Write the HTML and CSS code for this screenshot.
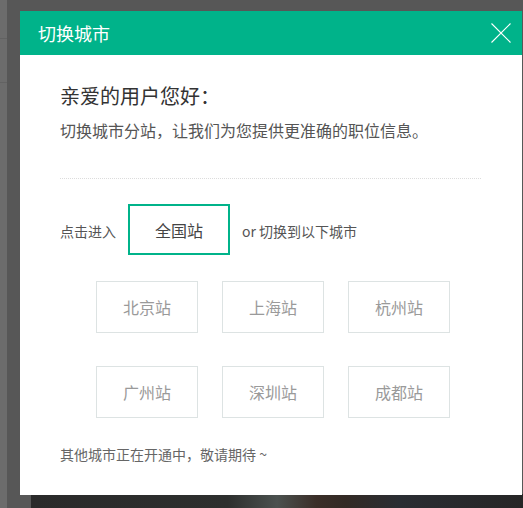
FILE: index.html
```html
<!DOCTYPE html>
<html lang="zh-CN">
<head>
<meta charset="utf-8">
<title>切换城市</title>
<link rel="stylesheet" href="styles.css">
</head>
<body>
<div class="page">
  <div class="strip">
    <div class="strip-line one"></div>
    <div class="strip-line two"></div>
  </div>
  <div class="main">
    <div class="photo"></div>
  </div>
</div>
<div class="dialog">
  <div class="dialog-head">
    <span class="dialog-title">切换城市</span>
    <svg class="close" width="20" height="20" viewBox="0 0 20 20">
      <path d="M0.5 0.5 L19.5 19.5 M19.5 0.5 L0.5 19.5" stroke="#ffffff" stroke-width="1.1" fill="none"/>
    </svg>
  </div>
  <div class="dialog-body">
    <h2 class="hello">亲爱的用户您好：</h2>
    <p class="intro">切换城市分站，让我们为您提供更准确的职位信息。</p>
    <div class="divider"></div>
    <div class="entry">
      <span class="entry-label">点击进入</span>
      <a class="national">全国站</a>
      <span class="entry-label">or 切换到以下城市</span>
    </div>
    <div class="cities">
      <a class="city">北京站</a>
      <a class="city">上海站</a>
      <a class="city">杭州站</a>
      <a class="city">广州站</a>
      <a class="city">深圳站</a>
      <a class="city">成都站</a>
    </div>
    <p class="note">其他城市正在开通中，敬请期待 ~</p>
  </div>
</div>
</body>
</html>
```
FILE: styles.css
```css
html, body {
  margin: 0;
  padding: 0;
}
body {
  width: 523px;
  height: 508px;
  overflow: hidden;
  position: relative;
  background: #575757;
  font-family: "Noto Sans CJK SC", "Liberation Sans", sans-serif;
}
.page {
  display: flex;
  width: 523px;
  height: 508px;
}
.strip {
  width: 7px;
  background: #6c6c6c;
  display: flex;
  flex-direction: column;
}
.strip-line {
  height: 1px;
  background: #626262;
}
.strip-line.one { margin-top: 38px; }
.strip-line.two { margin-top: 43px; }
.main {
  flex: 1;
  display: flex;
  flex-direction: column;
  justify-content: flex-end;
  padding-left: 24px;
  background: #575757;
}
.photo {
  height: 14px;
  background: linear-gradient(90deg, #2a2a2a 0%, #2d2f2e 40%, #4b514f 50%, #3a2e28 58%, #332a25 64%, #2a2d33 75%, #262626 100%);
}
.dialog {
  position: absolute;
  left: 20px;
  top: 11px;
  width: 502px;
  height: 484px;
  background: #ffffff;
}
.dialog-head {
  height: 44px;
  background: #00b38a;
  display: flex;
  align-items: center;
  justify-content: space-between;
  padding: 0 11px 0 18px;
}
.dialog-title {
  color: #ffffff;
  font-size: 18px;
  line-height: 24px;
}
.close {
  display: block;
  margin-top: -1px;
}
.dialog-body {
  padding: 0 41px 0 40px;
}
.hello {
  margin: 31px 0 0;
  font-size: 20px;
  line-height: 20px;
  font-weight: normal;
  color: #333333;
}
.intro {
  margin: 14px 0 0;
  font-size: 16px;
  line-height: 20px;
  color: #555555;
}
.divider {
  margin-top: 38px;
  border-top: 1px dotted #dcdcdc;
}
.entry {
  margin-top: 25px;
  display: flex;
  align-items: center;
  gap: 12px;
}
.entry-label {
  font-size: 14px;
  line-height: 20px;
  color: #555555;
  margin-top: 3px;
}
.national {
  box-sizing: border-box;
  width: 102px;
  height: 51px;
  border: 2px solid #00b38a;
  display: flex;
  align-items: center;
  justify-content: center;
  font-size: 16px;
  color: #444444;
  padding-top: 1px;
}
.cities {
  margin-top: 26px;
  padding-left: 36px;
  display: grid;
  grid-template-columns: repeat(3, 102px);
  grid-auto-rows: 52px;
  column-gap: 24px;
  row-gap: 33px;
}
.city {
  box-sizing: border-box;
  border: 1px solid #dde3e3;
  display: flex;
  align-items: center;
  justify-content: center;
  font-size: 16px;
  color: #9a9a9a;
}
.note {
  margin: 26px 0 0;
  font-size: 14px;
  line-height: 20px;
  color: #666666;
}
```
